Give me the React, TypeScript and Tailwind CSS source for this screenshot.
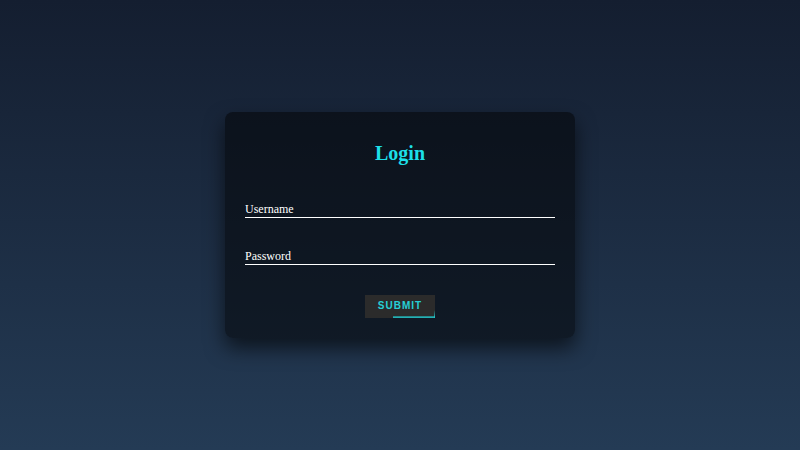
const FIELDS = [
  { id: "username", label: "Username", type: "text" },
  { id: "password", label: "Password", type: "password" },
];

export default function App() {
  return (
    <main className="grid min-h-screen place-items-center bg-linear-to-b from-[#141e30] to-[#243b55] font-['Liberation_Serif',serif]">
      <form className="w-full max-w-[350px] rounded-lg bg-black/50 px-5 pt-[27px] pb-5 shadow-[0_10px_20px_rgba(0,0,0,0.6)]">
        <h2 className="mb-[33px] text-center text-[20px] leading-7 font-bold text-[#1cdfe8]">Login</h2>

        <div className="mb-[30px] grid gap-[29px]">
          {FIELDS.map((field) => (
            <div key={field.id} className="relative">
              <input
                id={field.id}
                type={field.type}
                required
                className="peer block h-[18px] w-full border-b border-white bg-transparent text-[12px] text-white outline-none"
              />
              <label
                htmlFor={field.id}
                className="pointer-events-none absolute bottom-px left-0 text-[12px] leading-4 text-white transition-all peer-valid:-translate-y-5 peer-focus:-translate-y-5"
              >
                {field.label}
              </label>
            </div>
          ))}
        </div>

        <div className="flex justify-center">
          <button
            type="submit"
            className="relative h-[23px] overflow-hidden bg-[#2b2b2b] px-3 pb-0.5 font-['Liberation_Sans',sans-serif] text-[10px] leading-4 font-bold tracking-[1px] text-[#26d0d6] uppercase min-w-[70px]"
          >
            Submit
            <span className="absolute right-0 bottom-0 h-0.5 w-[42px] bg-linear-to-b from-[#25787a] to-[#1fc4c8]" />
            <span className="absolute right-0 bottom-0 h-2 w-px bg-linear-to-t from-[#1fc4c8] to-transparent" />
          </button>
        </div>
      </form>
    </main>
  );
}
